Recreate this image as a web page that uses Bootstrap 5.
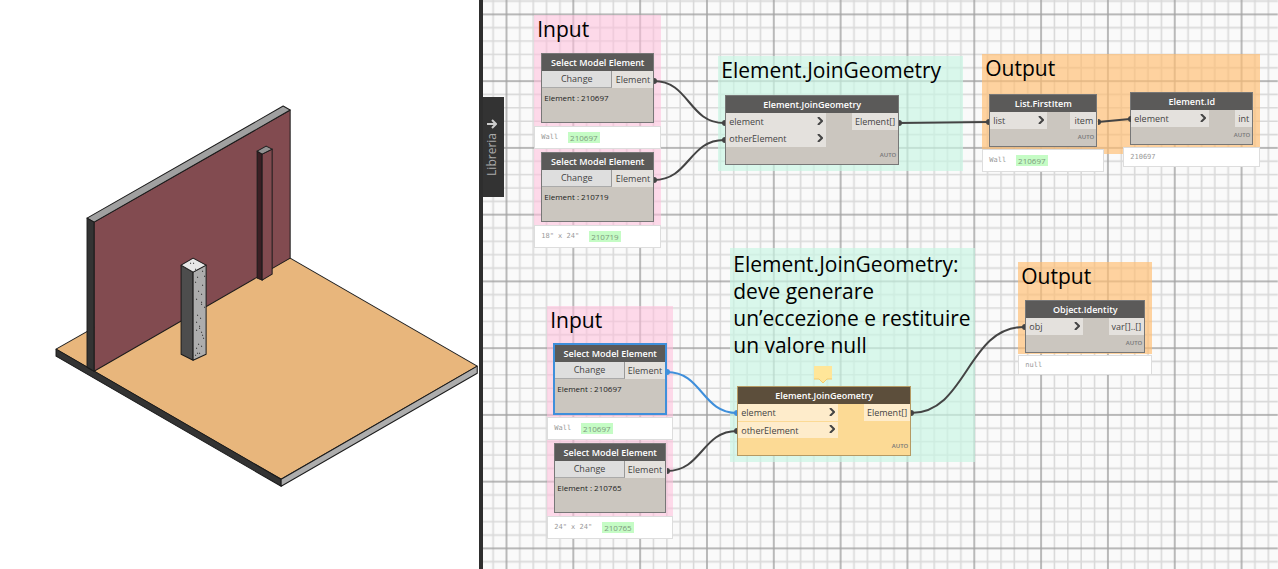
<!DOCTYPE html>
<html lang="it">
<head>
<meta charset="utf-8">
<meta name="viewport" content="width=device-width, initial-scale=1">
<title>Element.JoinGeometry</title>
<link href="https://cdn.jsdelivr.net/npm/bootstrap@5.3.0/dist/css/bootstrap.min.css" rel="stylesheet">
<style>
  body { font-family: "Open Sans", "Noto Sans", sans-serif; color: #333; background: #fff; }
  .scene-pane { flex: 0 0 37.5%; }
  .scene-pane svg { display: block; width: 100%; height: auto; }
  .splitter { flex: 0 0 4px; background: #2e2e2e; }
  .graph { background: #fafafa; min-width: 0; }
  .grid-lines, .wires { position: absolute; left: 0; top: 0; width: 100%; height: 100%; }
  .wires { pointer-events: none; fill: none; stroke: #444; stroke-width: 2; }
  .wires .ends { fill: #444; stroke: none; }
  .wires .active { stroke: #3f8fdb; }
  .wires .ends.active-end { fill: #3f8fdb; }

  .library-tab { left: 0; top: 97px; width: 21px; height: 100px; background: #333; color: #aaa; font-size: 12px; line-height: 18px; padding: 0 3px 0 0; }
  .library-tab .tab-text { writing-mode: vertical-rl; transform: rotate(180deg); }

  .node-group { position: absolute; }
  .group-title { color: #000; font-size: 21px; line-height: 27px; font-weight: 400; margin: 0; padding: 1px 3px 0; min-height: 38px; white-space: nowrap; }
  .group-in { background: rgba(255, 190, 220, .56); }
  .group-fn { background: rgba(200, 246, 228, .66); }
  .group-out { background: rgba(255, 190, 115, .68); }

  .node-box { background: #cbc6bf; border: 1px solid #777; margin: 0 7px; font-size: 9px; line-height: 17px; color: #444; }
  .node-head { background: #5b5a59; color: #fff; font-weight: 600; text-align: center; height: 17px; }
  .node-box.picker { height: 70px; margin-bottom: 3px; }
  .node-box.twoport { height: 70px; }
  .node-box.oneport { height: 53px; margin-bottom: 2px; }
  .node-box.selected { outline: 1px solid #3f8fdb; border-color: #3f8fdb; }
  .node-box.warning { background: #fcda95; border-color: #b59a63; }
  .node-box.warning .node-head { background: #5c4e3b; }
  .btn-change { width: 70px; height: 17px; padding: 0; border: 0; border-right: 1px solid #999; border-bottom: 1px solid #aaa; border-radius: 0; background: #dedede; color: #444; font-size: 9px; line-height: 16px; }
  .port { background: #e4e1dd; height: 17px; padding: 0 3px; }
  .warning .port { background: #feeccb; }
  .warning .port + .port { border-top: 1px solid #fcda95; }
  .w-in { width: 100px; }
  .w-in-sm { width: 57px; }
  .w-in-md { width: 78px; }
  .port-out { min-width: 26px; text-align: right; }
  .port svg { width: 6px; height: 8px; fill: none; stroke: #444; stroke-width: 2; margin-bottom: 2px; }
  .picked { font-size: 8px; line-height: 19px; padding: 0 2px; color: #222; }
  .auto-mark { font-size: 6px; font-weight: 600; line-height: 17px; text-align: right; padding-right: 2px; color: #777; }
  .preview { background: #fff; border: 1px solid #ddd; height: 23px; margin-bottom: 3px; padding: 0 6px; font-family: "DejaVu Sans Mono", monospace; font-size: 7px; color: #999; }
  .preview.low { height: 20px; }
  .preview .id-tag { font-family: "Open Sans", sans-serif; font-size: 8px; line-height: 11px; background: #c5fcc5; color: #7d9a7d; padding: 0 2px; margin-left: 10px; }

  .in-1 { left: 51px; top: 15px; width: 127px; height: 210px; }
  .in-2 { left: 64px; top: 306px; width: 126px; height: 210px; }
  .fn-1 { left: 235px; top: 56px; width: 245px; height: 115px; }
  .fn-2 { left: 247px; top: 248px; width: 245px; height: 214px; }
  .out-1 { left: 499px; top: 54px; width: 278px; height: 100px; }
  .out-2 { left: 535px; top: 262px; width: 134px; height: 92px; }
  .stack-a { position: absolute; left: 0; top: 40px; width: 122px; }
  .stack-b { position: absolute; left: 141px; top: 38px; width: 137px; }
  .note { position: absolute; left: 84px; top: 118px; width: 18px; height: 18px; }
  .fn-1 .group-title { min-height: 39px; }
  .fn-2 .group-title { min-height: 138px; padding-top: 3px; }
  .fn-1 .node-box, .fn-2 .node-box { width: 174px; }
</style>
</head>
<body>
<main class="d-flex min-vh-100">
  <section class="scene-pane" aria-label="Vista 3D">
    <svg viewBox="0 0 479 569" role="img" aria-label="Muro, pilastri e pavimento" stroke="#1b1b1b" stroke-linejoin="round">
      <path d="M56 349 L100 324 L290 258 L477 366 L281 479 Z" fill="#e8b67c"/>
      <path d="M56 349 L281 479 V486 L56 356 Z" fill="#333"/>
      <path d="M281 479 L477 366 V373 L281 486 Z" fill="#adadad"/>
      <path d="M94 222 L290 110 V258 L94 371 Z" fill="#824b50"/>
      <path d="M87 218 L283 106 L290 110 L94 222 Z" fill="#a0a0a0"/>
      <path d="M87 218 L94 222 V371 L87 367 Z" fill="#333"/>
      <path d="M257 151 L262 154 V280 L257 278 Z" fill="#3b1f24"/>
      <path d="M262 154 L272 149 V274 L262 280 Z" fill="#824b50"/>
      <path d="M257 151 L266 146 L272 149 L262 154 Z" fill="#929292"/>
      <path d="M181 265 L193 272 V360 L181 354 Z" fill="#4d4d4d"/>
      <path d="M193 272 L206 265 V354 L193 360 Z" fill="#adadad"/>
      <path d="M181 265 L193 258 L206 265 L193 272 Z" fill="#e7e7e7"/>
      <path d="M190 263h1M193 263h1M195 269h1M197 277h1M202 271h1M204 276h1M195 282h1M202 285h1M198 291h1M201 294h1M196 299h1M201 302h1M201 304h1M204 307h1M197 315h1M200 318h1M196 322h1M199 326h1M199 328h1M201 332h1M202 335h1M196 330h1M203 338h1M198 344h1M201 346h1M196 348h1M197 353h1M199 353h1M195 355h1" fill="none"/>
    </svg>
  </section>
  <div class="splitter"></div>
  <section class="graph position-relative flex-grow-1 overflow-hidden" aria-label="Grafico">
    <svg class="grid-lines" aria-hidden="true">
      <defs>
        <pattern id="grid" width="500" height="500" patternUnits="userSpaceOnUse" patternTransform="translate(23.5 14.4) scale(.13365 .1335)">
          <path d="M100 0V500M200 0V500M300 0V500M400 0V500M0 100H500M0 200H500M0 300H500M0 400H500" stroke="#d9d9d9" stroke-width="12"/>
          <path d="M0 0V500M500 0V500M0 0H500M0 500H500" stroke="#a2a2a2" stroke-width="11"/>
        </pattern>
      </defs>
      <rect width="100%" height="100%" fill="url(#grid)"/>
    </svg>

    <button type="button" class="library-tab position-absolute border-0 d-flex flex-column align-items-center justify-content-center gap-1">
      <svg width="10" height="10" viewBox="0 0 10 10" fill="none" stroke="#ccc" stroke-width="2" aria-hidden="true"><path d="M0 5H9M5 1L9 5L5 9"/></svg>
      <span class="tab-text">Libreria</span>
    </button>

    <article class="node-group group-in in-1">
      <h2 class="group-title">Input</h2>
      <div class="node-box picker">
        <div class="node-head">Select Model Element</div>
        <div class="d-flex"><button type="button" class="btn btn-change">Change</button><div class="port flex-grow-1 text-end">Element</div></div>
        <div class="picked">Element : 210697</div>
      </div>
      <div class="preview d-flex align-items-center"><span>Wall</span><span class="id-tag">210697</span></div>
      <div class="node-box picker">
        <div class="node-head">Select Model Element</div>
        <div class="d-flex"><button type="button" class="btn btn-change">Change</button><div class="port flex-grow-1 text-end">Element</div></div>
        <div class="picked">Element : 210719</div>
      </div>
      <div class="preview d-flex align-items-center"><span>18" x 24"</span><span class="id-tag">210719</span></div>
    </article>

    <article class="node-group group-fn fn-1">
      <h2 class="group-title">Element.JoinGeometry</h2>
      <div class="node-box twoport">
        <div class="node-head">Element.JoinGeometry</div>
        <div class="d-flex justify-content-between">
          <div class="w-in">
            <div class="port d-flex align-items-center justify-content-between">element <svg viewBox="0 0 6 8"><path d="M1 0L5 4L1 8"/></svg></div>
            <div class="port d-flex align-items-center justify-content-between">otherElement <svg viewBox="0 0 6 8"><path d="M1 0L5 4L1 8"/></svg></div>
          </div>
          <div class="port port-out">Element[]</div>
        </div>
        <div class="auto-mark">AUTO</div>
      </div>
    </article>

    <article class="node-group group-out out-1">
      <h2 class="group-title">Output</h2>
      <div class="stack-a">
        <div class="node-box oneport">
          <div class="node-head">List.FirstItem</div>
          <div class="d-flex justify-content-between">
            <div class="port w-in-sm d-flex align-items-center justify-content-between">list <svg viewBox="0 0 6 8"><path d="M1 0L5 4L1 8"/></svg></div>
            <div class="port port-out">item</div>
          </div>
          <div class="auto-mark">AUTO</div>
        </div>
        <div class="preview d-flex align-items-center"><span>Wall</span><span class="id-tag">210697</span></div>
      </div>
      <div class="stack-b">
        <div class="node-box oneport">
          <div class="node-head">Element.Id</div>
          <div class="d-flex justify-content-between">
            <div class="port w-in-md d-flex align-items-center justify-content-between">element <svg viewBox="0 0 6 8"><path d="M1 0L5 4L1 8"/></svg></div>
            <div class="port">int</div>
          </div>
          <div class="auto-mark">AUTO</div>
        </div>
        <div class="preview low d-flex align-items-center">210697</div>
      </div>
    </article>

    <article class="node-group group-in in-2">
      <h2 class="group-title">Input</h2>
      <div class="node-box picker selected">
        <div class="node-head">Select Model Element</div>
        <div class="d-flex"><button type="button" class="btn btn-change">Change</button><div class="port flex-grow-1 text-end">Element</div></div>
        <div class="picked">Element : 210697</div>
      </div>
      <div class="preview d-flex align-items-center"><span>Wall</span><span class="id-tag">210697</span></div>
      <div class="node-box picker">
        <div class="node-head">Select Model Element</div>
        <div class="d-flex"><button type="button" class="btn btn-change">Change</button><div class="port flex-grow-1 text-end">Element</div></div>
        <div class="picked">Element : 210765</div>
      </div>
      <div class="preview d-flex align-items-center"><span>24" x 24"</span><span class="id-tag">210765</span></div>
    </article>

    <article class="node-group group-fn fn-2">
      <h2 class="group-title">Element.JoinGeometry:<br>deve generare<br>un’eccezione e restituire<br>un valore null</h2>
      <svg class="note" viewBox="0 0 18 18" aria-hidden="true"><path d="M0 0H18V13H13L9 17L5 13H0Z" fill="#ffe699"/><path d="M0 13H5L9 17L13 13H18" fill="none" stroke="#f3cb6d"/></svg>
      <div class="node-box twoport warning">
        <div class="node-head">Element.JoinGeometry</div>
        <div class="d-flex justify-content-between">
          <div class="w-in">
            <div class="port d-flex align-items-center justify-content-between">element <svg viewBox="0 0 6 8"><path d="M1 0L5 4L1 8"/></svg></div>
            <div class="port d-flex align-items-center justify-content-between">otherElement <svg viewBox="0 0 6 8"><path d="M1 0L5 4L1 8"/></svg></div>
          </div>
          <div class="port port-out">Element[]</div>
        </div>
        <div class="auto-mark">AUTO</div>
      </div>
    </article>

    <article class="node-group group-out out-2">
      <h2 class="group-title">Output</h2>
      <div class="node-box oneport">
        <div class="node-head">Object.Identity</div>
        <div class="d-flex justify-content-between">
          <div class="port w-in-sm d-flex align-items-center justify-content-between">obj <svg viewBox="0 0 6 8"><path d="M1 0L5 4L1 8"/></svg></div>
          <div class="port port-out">var[]..[]</div>
        </div>
        <div class="auto-mark">AUTO</div>
      </div>
      <div class="preview low d-flex align-items-center">null</div>
    </article>

    <svg class="wires" aria-hidden="true">
      <path d="M171 81C206 81 206 123 241 123M171 180C206 180 206 140 241 140M416 123L506 122M615 122L647 119M184 471C219 471 219 431 254 431M428 413C484 413 484 327 541 327"/>
      <path class="active" d="M184 372C219 372 219 413 254 413"/>
      <path class="ends" d="M171 78a3 3 0 0 1 0 6zM171 177a3 3 0 0 1 0 6zM242 120a3 3 0 0 0 0 6zM242 137a3 3 0 0 0 0 6zM416 120a3 3 0 0 1 0 6zM506 119a3 3 0 0 0 0 6zM615 119a3 3 0 0 1 0 6zM648 116a3 3 0 0 0 0 6zM184 468a3 3 0 0 1 0 6zM254 428a3 3 0 0 0 0 6zM428 410a3 3 0 0 1 0 6zM542 324a3 3 0 0 0 0 6z"/>
      <path class="ends active-end" d="M184 369a3 3 0 0 1 0 6zM254 410a3 3 0 0 0 0 6z"/>
    </svg>
  </section>
</main>
<script src="https://cdn.jsdelivr.net/npm/bootstrap@5.3.0/dist/js/bootstrap.bundle.min.js"></script>
</body>
</html>
